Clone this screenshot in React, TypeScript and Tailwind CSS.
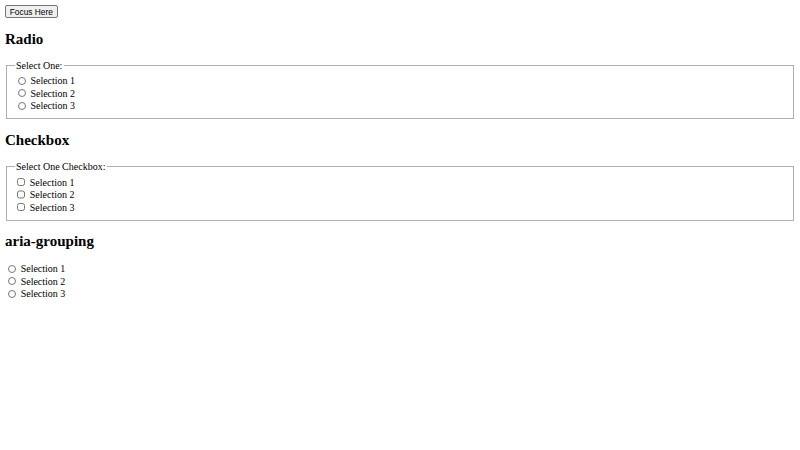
export default function App() {
  const items = ["Selection 1", "Selection 2", "Selection 3"];

  return (
    <div className="min-h-[450px] bg-white p-[5px] font-['Liberation_Serif',serif] text-[10px] leading-[normal] text-black">
      <button className="rounded-[2px] border-[1px] border-[#767676] bg-[#efefef] px-[3.75px] py-[0.625px] font-['Liberation_Sans',Arial,sans-serif] text-[8.333px] leading-[normal]">
        Focus Here
      </button>

      <h2 className="my-[12.45px] text-[15px] font-bold leading-[normal]">Radio</h2>
      <fieldset className="mx-[1.25px] border border-[#b0b0b0] px-[7.5px] pt-[3.5px] pb-[6.25px]">
        <legend className="px-[1.25px]">Select One:</legend>
        {items.map((label, i) => (
          <div key={label} className="flex h-[12.5px] items-center">
            <input
              type="radio"
              name="radio-one"
              id={`r${i}`}
              className="mr-[1.875px] ml-[3.125px] h-[8.125px] w-[8.125px]"
            />
            <label htmlFor={`r${i}`} className="pl-[2.5px]">{label}</label>
          </div>
        ))}
      </fieldset>

      <h2 className="my-[12.45px] text-[15px] font-bold leading-[normal]">Checkbox</h2>
      <fieldset className="mx-[1.25px] border border-[#b0b0b0] px-[7.5px] pt-[3.5px] pb-[6.25px]">
        <legend className="px-[1.25px]">Select One Checkbox:</legend>
        {items.map((label, i) => (
          <div key={label} className="flex h-[12.5px] items-center">
            <input
              type="checkbox"
              id={`c${i}`}
              className="mr-[1.875px] ml-[2.5px] h-[8.125px] w-[8.125px]"
            />
            <label htmlFor={`c${i}`} className="pl-[2.5px]">{label}</label>
          </div>
        ))}
      </fieldset>

      <h2 className="my-[12.45px] text-[15px] font-bold leading-[normal]">aria-grouping</h2>
      <div role="radiogroup">
        {items.map((label, i) => (
          <div key={label} className="flex h-[12.5px] items-center">
            <input
              type="radio"
              name="radio-aria"
              id={`a${i}`}
              className="mr-[1.875px] ml-[3.125px] h-[8.125px] w-[8.125px]"
            />
            <label htmlFor={`a${i}`} className="pl-[2.5px]">{label}</label>
          </div>
        ))}
      </div>
    </div>
  );
}
